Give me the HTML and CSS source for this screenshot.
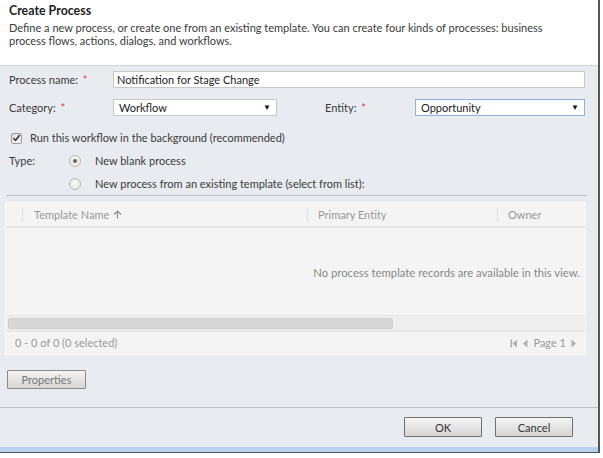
FILE: index.html
```html
<!DOCTYPE html>
<html>
<head>
<meta charset="utf-8">
<link rel="stylesheet" href="styles.css">
</head>
<body>
<div class="window">
  <div class="header">
    <div class="title">Create Process</div>
    <div class="desc">Define a new process, or create one from an existing template. You can create four kinds of processes: business process flows, actions, dialogs, and workflows.</div>
  </div>
  <div class="body">
    <div class="form">
      <div class="row">
        <label class="lbl">Process name: <span class="req">*</span></label>
        <div class="input wide">Notification for Stage Change</div>
      </div>
      <div class="row row2">
        <label class="lbl">Category: <span class="req">*</span></label>
        <div class="input select cat">Workflow<span class="arrow">▼</span></div>
        <label class="lbl ent">Entity: <span class="req">*</span></label>
        <div class="input select entity">Opportunity<span class="arrow">▼</span></div>
      </div>
      <div class="check-row">
        <span class="checkbox"><svg width="10" height="10" viewBox="0 0 10 10"><path d="M1.5 5.2 L4 7.6 L8.6 1.8" fill="none" stroke="#3a3a3a" stroke-width="1.8"/></svg></span>
        <span>Run this workflow in the background (recommended)</span>
      </div>
      <div class="type-grid">
        <span class="lbl">Type:</span>
        <span class="radio checked"><span class="dot"></span></span>
        <span>New blank process</span>
        <span></span>
        <span class="radio"></span>
        <span>New process from an existing template (select from list):</span>
      </div>
    </div>
    <div class="sep"></div>
    <div class="grid">
      <div class="ghead">
        <div class="gcol c1">Template Name <svg width="9" height="9" viewBox="0 0 9 9"><path d="M4.5 8.5 V1 M1 4.5 L4.5 1 L8 4.5" fill="none" stroke="#888" stroke-width="1.1"/></svg></div>
        <div class="gcol c2">Primary Entity</div>
        <div class="gcol c3">Owner</div>
      </div>
      <div class="gbody">
        <div class="empty">No process template records are available in this view.</div>
      </div>
      <div class="scroll"><div class="thumb"></div></div>
      <div class="gfoot">
        <span>0 - 0 of 0 (0 selected)</span>
        <span class="pager">
          <svg width="8" height="9" viewBox="0 0 8 9"><rect x="0.5" y="0.5" width="1.6" height="8" fill="#b0b0b0"/><path d="M7 0.5 L2.6 4.5 L7 8.5 Z" fill="#b0b0b0"/></svg>
          <svg class="pl" width="6" height="9" viewBox="0 0 6 9"><path d="M5.5 0.5 L1 4.5 L5.5 8.5 Z" fill="#b0b0b0"/></svg>
          <span class="page">Page 1</span>
          <svg width="6" height="9" viewBox="0 0 6 9"><path d="M0.5 0.5 L5 4.5 L0.5 8.5 Z" fill="#b0b0b0"/></svg>
        </span>
      </div>
    </div>
    <div class="props-row"><button class="btn props">Properties</button></div>
    <div class="footer">
      <button class="btn ok">OK</button>
      <button class="btn cancel">Cancel</button>
    </div>
  </div>
  <div class="blueband"></div>
</div>
</body>
</html>
```
FILE: styles.css
```css
html, body {
  margin: 0;
  padding: 0;
  background: #ffffff;
}
body {
  width: 603px;
  height: 458px;
  overflow: hidden;
  font-family: Lato, "Open Sans", sans-serif;
  font-size: 11px;
  line-height: 14px;
  color: #3b3b3b;
}
.window {
  width: 598px;
  height: 452px;
  border-right: 2px solid #555;
  border-bottom: 1px solid #555;
  display: flex;
  flex-direction: column;
  background: #e8ebef;
}
.header {
  background: #fff;
  height: 66px;
  flex: none;
  box-sizing: border-box;
  border-bottom: 1px solid #cfd2d6;
  padding: 3px 9px 0 9px;
}
.title {
  font-weight: bold;
  font-size: 12.4px;
  color: #222;
  line-height: 16px;
}
.desc {
  line-height: 13px;
  color: #3b3b3b;
  margin-top: 2px;
  max-width: 556px;
}
.body {
  flex: 1;
  display: flex;
  flex-direction: column;
}
.form {
  padding: 5px 9px 0 9px;
}
.row {
  display: flex;
  align-items: center;
  height: 17px;
}
.row2 { margin-top: 11px; }
.lbl {
  width: 104px;
  flex: none;
  color: #3b3b3b;
}
.req { color: #e23b3b; margin-left: 2px; }
.input {
  height: 17px;
  box-sizing: border-box;
  border: 1px solid #c8c8c8;
  background: #fff;
  padding: 0 3px;
  line-height: 15px;
  color: #222;
}
.wide { width: 472px; }
.select { position: relative; padding-left: 5px; }
.cat { width: 164px; }
.lbl.ent { width: 90px; margin-left: 48px; }
.entity { width: 170px; border-color: #8fb3e0; }
.arrow {
  position: absolute;
  right: 5px;
  top: 0;
  font-size: 8px;
  color: #111;
}
.check-row {
  display: flex;
  align-items: center;
  margin-top: 15px;
  gap: 8px;
  height: 14px;
}
.checkbox {
  width: 11px;
  height: 11px;
  margin-left: 2px;
  box-sizing: border-box;
  border: 1px solid #9a9a9a;
  background: linear-gradient(#e0e0e0, #f4f4f4);
  display: flex;
  align-items: center;
  justify-content: center;
  border-radius: 2px;
}
.type-grid {
  display: grid;
  grid-template-columns: 60px 26px auto;
  grid-auto-rows: 23px;
  align-items: center;
  margin-top: 4px;
}
.radio {
  width: 12px;
  height: 12px;
  box-sizing: border-box;
  border: 1px solid #b9b9b9;
  border-radius: 50%;
  background: radial-gradient(circle at 50% 40%, #fbfbfb, #e2e2e2);
  display: flex;
  align-items: center;
  justify-content: center;
}
.dot {
  width: 4px; height: 4px; border-radius: 50%; background: #666;
}
.sep {
  height: 1px;
  flex: none;
  background: #bfc2c6;
  margin: 0 11px 0 6px;
}
.grid {
  margin: 6px 12px 0 5px;
  background: #f4f4f4;
  border: 1px solid #fafafa;
  display: flex;
  flex-direction: column;
  height: 153px;
  flex: none;
  box-sizing: border-box;
  color: #999;
}
.ghead {
  display: flex;
  height: 23px;
  flex: none;
  border-bottom: 2px solid #e3e3e3;
  align-items: center;
  color: #999;
}
.gcol {
  border-left: 1px solid #ddd;
  height: 14px;
  line-height: 14px;
  padding-left: 11px;
  box-sizing: border-box;
  display: flex;
  align-items: center;
  gap: 4px;
}
.c1 { margin-left: 16px; width: 285px; }
.c2 { width: 190px; padding-left: 10px; }
.c3 { padding-left: 10px; flex: 1; }
.gbody {
  height: 87px;
  flex: none;
  position: relative;
}
.empty {
  position: absolute;
  right: 5px;
  top: 38px;
  font-size: 11.3px;
  color: #888;
}
.scroll {
  height: 14px;
  flex: none;
  background: #eeeeee;
  border-top: 1px solid #e8e8e8;
  display: flex;
  align-items: center;
  padding-left: 2px;
}
.thumb {
  width: 383px;
  height: 9px;
  background: #d7d7d7;
  border: 1px solid #cfcfcf;
  border-radius: 2px;
}
.gfoot {
  border-top: 2px solid #e6e6e6;
  flex: 1;
  display: flex;
  align-items: center;
  justify-content: space-between;
  padding: 0 8px 0 9px;
  color: #999;
}
.pager {
  display: flex;
  align-items: center;
  gap: 4px;
}
.pager .page { color: #999; margin: 0 1px; }
.props-row {
  padding: 15px 0 0 7px;
  height: 53px;
  flex: none;
  box-sizing: border-box;
  border-bottom: 1px solid #bcbfc3;
}
.btn {
  font-family: Lato, "Open Sans", sans-serif;
  font-size: 11px;
  height: 19px;
  padding: 0;
  box-sizing: border-box;
  border: 1px solid #707070;
  background: linear-gradient(#f5f5f5, #e4e4e4 50%, #d6d6d6);
  color: #333;
  border-radius: 1px;
}
.props {
  width: 79px;
  color: #777;
  border-color: #8a8a8a;
}
.footer {
  display: flex;
  justify-content: flex-end;
  gap: 13px;
  padding: 9px 25px 0 0;
}
.ok, .cancel { width: 78px; height: 20px; }
.blueband {
  height: 5px;
  flex: none;
  background: #b7d1ef;
  margin-top: auto;
}
```
